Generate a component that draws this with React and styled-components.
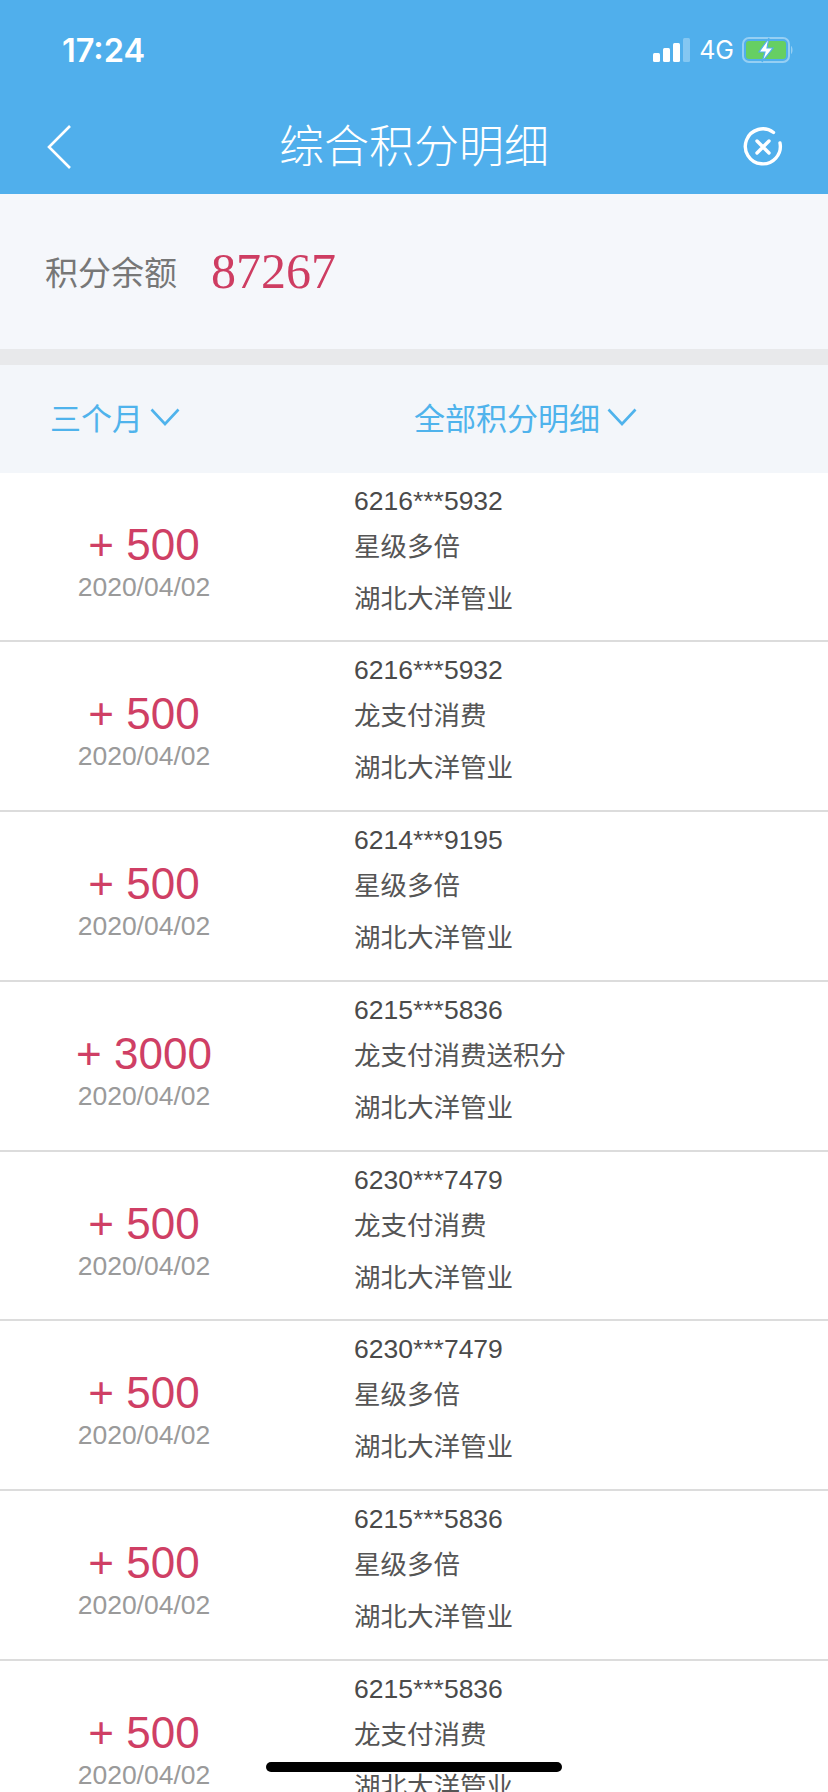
import React from 'react';
import styled, { createGlobalStyle } from 'styled-components';

const GlobalStyle = createGlobalStyle`
  html, body {
    margin: 0;
    padding: 0;
    background: #fff;
  }
`;

const FONT = `'Liberation Sans', 'Noto Sans CJK SC', sans-serif`;

const records = [
  { points: '+ 500', card: '6216***5932', kind: '星级多倍' },
  { points: '+ 500', card: '6216***5932', kind: '龙支付消费' },
  { points: '+ 500', card: '6214***9195', kind: '星级多倍' },
  { points: '+ 3000', card: '6215***5836', kind: '龙支付消费送积分' },
  { points: '+ 500', card: '6230***7479', kind: '龙支付消费' },
  { points: '+ 500', card: '6230***7479', kind: '星级多倍' },
  { points: '+ 500', card: '6215***5836', kind: '星级多倍' },
  { points: '+ 500', card: '6215***5836', kind: '龙支付消费' },
];

const Page = styled.div`
  position: relative;
  width: 828px;
  height: 1792px;
  overflow: hidden;
  font-family: ${FONT};
  background: #fff;
`;

const Header = styled.header`
  background: #50afec;
  color: #fff;
  height: 194px;
`;

const StatusBar = styled.div`
  height: 100px;
  display: flex;
  align-items: center;
  justify-content: space-between;
  padding: 0 34px 0 62px;
  box-sizing: border-box;
`;

const Clock = styled.span`
  font-family: Inter, ${FONT};
  font-size: 32.5px;
  font-weight: 600;
`;

const StatusIcons = styled.div`
  display: flex;
  align-items: center;
  gap: 8px;
`;

const Network = styled.span`
  font-family: Inter, ${FONT};
  font-size: 25px;
`;

const NavBar = styled.div`
  height: 94px;
  display: grid;
  grid-template-columns: 100px 1fr 100px;
  align-items: center;
`;

const NavIcon = styled.div`
  display: flex;
  justify-content: ${(p) => (p.$right ? 'flex-start' : 'flex-end')};
  padding: ${(p) => (p.$right ? '0 0 0 15px' : '0 28px 0 0')};

  svg {
    display: block;
  }
`;

const Title = styled.h1`
  margin: 0;
  text-align: center;
  font-size: 45px;
  font-weight: 300;
  line-height: 1;
`;

const Balance = styled.section`
  height: 155px;
  display: flex;
  align-items: center;
  gap: 34px;
  padding: 0 0 1px 45px;
  box-sizing: border-box;
  background: #f5f7fb;
`;

const BalanceLabel = styled.span`
  font-size: 33px;
  color: #777;
`;

const BalanceValue = styled.span`
  font-family: 'Liberation Serif', serif;
  font-size: 50px;
  color: #ce3d62;
`;

const Divider = styled.div`
  height: 16px;
  background: #e8e9eb;
`;

const Filters = styled.div`
  height: 107.5px;
  display: grid;
  grid-template-columns: 414px 1fr;
  align-items: center;
  padding-bottom: 4px;
  box-sizing: border-box;
  background: #f3f6fa;
`;

const Filter = styled.div`
  display: flex;
  align-items: center;
  gap: 7px;
  padding-left: ${(p) => p.$inset || 0}px;
  font-size: 31px;
  color: #4fb3ec;
`;

const Row = styled.div`
  height: 169.8px;
  box-sizing: border-box;
  display: grid;
  grid-template-columns: 354px 1fr;
  border-bottom: 2px solid #dcdcdc;
`;

const Amount = styled.div`
  width: 288px;
  padding-top: 49px;
  text-align: center;
`;

const Points = styled.div`
  font-size: 44px;
  line-height: 46px;
  color: #cf3f65;
`;

const DateText = styled.div`
  margin-top: 4px;
  font-size: 26.5px;
  line-height: 30px;
  color: #9a9a9a;
`;

const Detail = styled.div`
  padding-top: 12px;
`;

const Card = styled.div`
  font-size: 26.5px;
  line-height: 32px;
  color: #4a4a4a;
`;

const DetailLine = styled.div`
  margin-top: ${(p) => p.$gap}px;
  font-size: 26.5px;
  line-height: 38px;
  color: #555;
`;

const HomeIndicator = styled.div`
  position: absolute;
  left: 266px;
  bottom: 20px;
  width: 296px;
  height: 10px;
  border-radius: 5px;
  background: #000;
`;

const Chevron = () => (
  <svg width="30" height="18" viewBox="0 0 30 18" fill="none">
    <path d="M1.5 1.5 L15 16 L28.5 1.5" stroke="#4fb3ec" strokeWidth="2.6" />
  </svg>
);

const Signal = () => (
  <svg width="38" height="24" viewBox="0 0 38 24">
    <rect x="0" y="15" width="7" height="9" rx="1.5" fill="#fff" />
    <rect x="10" y="10" width="7" height="14" rx="1.5" fill="#fff" />
    <rect x="20" y="5" width="7" height="19" rx="1.5" fill="#fff" />
    <rect x="30" y="0" width="7" height="24" rx="1.5" fill="#fff" opacity="0.3" />
  </svg>
);

const Battery = () => (
  <svg width="52" height="26" viewBox="0 0 52 26" fill="none">
    <rect x="1" y="1" width="46" height="24" rx="6" stroke="#fff" strokeOpacity="0.4" strokeWidth="2" />
    <rect x="4" y="4" width="40" height="18" rx="3" fill="#66cf63" />
    <path d="M49 9 C51 10 51 16 49 17 Z" fill="#fff" fillOpacity="0.4" />
    <path d="M27 1 L17 15 H23 L20 25 L31 11 H25 Z" fill="#fff" stroke="#50afec" strokeWidth="1.2" />
  </svg>
);

const BackIcon = () => (
  <svg width="26" height="46" viewBox="0 0 26 46" fill="none">
    <path d="M24 2 L3 23 L24 44" stroke="#fff" strokeWidth="2.6" />
  </svg>
);

const CloseIcon = () => (
  <svg width="40" height="40" viewBox="0 0 40 40" fill="none">
    <path d="M30.5 5.5 A17.5 17.5 0 1 0 37 16" stroke="#fff" strokeWidth="3.4" strokeLinecap="round" />
    <path d="M14 14 L26 26 M26 14 L14 26" stroke="#fff" strokeWidth="3.4" strokeLinecap="round" />
  </svg>
);

const App = () => {
  return (
    <Page>
      <GlobalStyle />
      <Header>
        <StatusBar>
          <Clock>17:24</Clock>
          <StatusIcons>
            <Signal />
            <Network>4G</Network>
            <Battery />
          </StatusIcons>
        </StatusBar>
        <NavBar>
          <NavIcon>
            <BackIcon />
          </NavIcon>
          <Title>综合积分明细</Title>
          <NavIcon $right>
            <CloseIcon />
          </NavIcon>
        </NavBar>
      </Header>
      <Balance>
        <BalanceLabel>积分余额</BalanceLabel>
        <BalanceValue>87267</BalanceValue>
      </Balance>
      <Divider />
      <Filters>
        <Filter $inset={50}>
          三个月
          <Chevron />
        </Filter>
        <Filter>
          全部积分明细
          <Chevron />
        </Filter>
      </Filters>
      {records.map((item, i) => (
        <Row key={i}>
          <Amount>
            <Points>{item.points}</Points>
            <DateText>2020/04/02</DateText>
          </Amount>
          <Detail>
            <Card>{item.card}</Card>
            <DetailLine $gap={11}>{item.kind}</DetailLine>
            <DetailLine $gap={14}>湖北大洋管业</DetailLine>
          </Detail>
        </Row>
      ))}
      <HomeIndicator />
    </Page>
  );
};

export default App;
